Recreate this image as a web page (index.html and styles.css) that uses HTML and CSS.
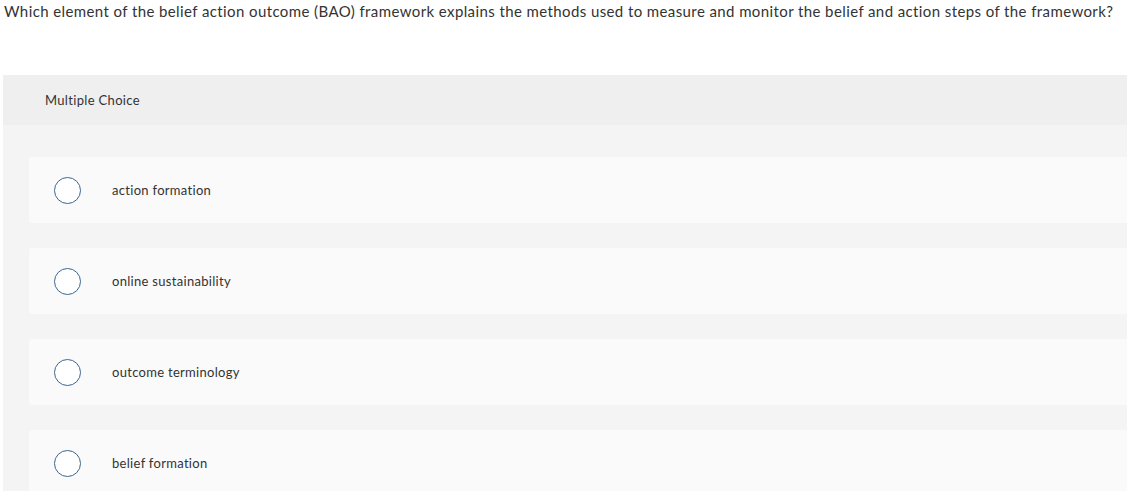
FILE: index.html
```html
<!DOCTYPE html>
<html>
<head>
<meta charset="utf-8">
<link rel="stylesheet" href="styles.css">
</head>
<body>
<p class="question">Which element of the belief action outcome (BAO) framework explains the methods used to measure and monitor the belief and action steps of the framework?</p>
<div class="panel">
  <div class="panel-head">Multiple Choice</div>
  <div class="panel-body">
    <div class="option"><span class="radio"></span><span class="label">action formation</span></div>
    <div class="option"><span class="radio"></span><span class="label">online sustainability</span></div>
    <div class="option"><span class="radio"></span><span class="label">outcome terminology</span></div>
    <div class="option"><span class="radio"></span><span class="label">belief formation</span></div>
  </div>
</div>
</body>
</html>
```
FILE: styles.css
```css
html, body {
  margin: 0;
  padding: 0;
  background: #fff;
  overflow: hidden;
}
body {
  font-family: "Lato", "Open Sans", sans-serif;
  color: #333;
}
.question {
  margin: 0;
  padding: 1px 0 0 4px;
  height: 75px;
  box-sizing: border-box;
  font-size: 15px;
  line-height: 20px;
  letter-spacing: 0.4px;
  white-space: nowrap;
}
.panel {
  margin-left: 3px;
  background: #f4f4f4;
}
.panel-head {
  height: 50px;
  background: #efefef;
  display: flex;
  align-items: center;
  padding-left: 42px;
  font-size: 13px;
  letter-spacing: 0.33px;
  color: #333;
}
.panel-body {
  padding: 32px 0 0 26px;
  display: flex;
  flex-direction: column;
  gap: 25px;
}
.option {
  height: 66px;
  background: #fafafa;
  border-radius: 3px 0 0 3px;
  display: flex;
  align-items: center;
  padding-left: 25px;
}
.radio {
  width: 25px;
  height: 25px;
  border: 1.5px solid #3a6593;
  border-radius: 50%;
  background: #fff;
  flex: none;
}
.label {
  margin-left: 31px;
  font-size: 13px;
  letter-spacing: 0.3px;
  color: #333;
}
```
